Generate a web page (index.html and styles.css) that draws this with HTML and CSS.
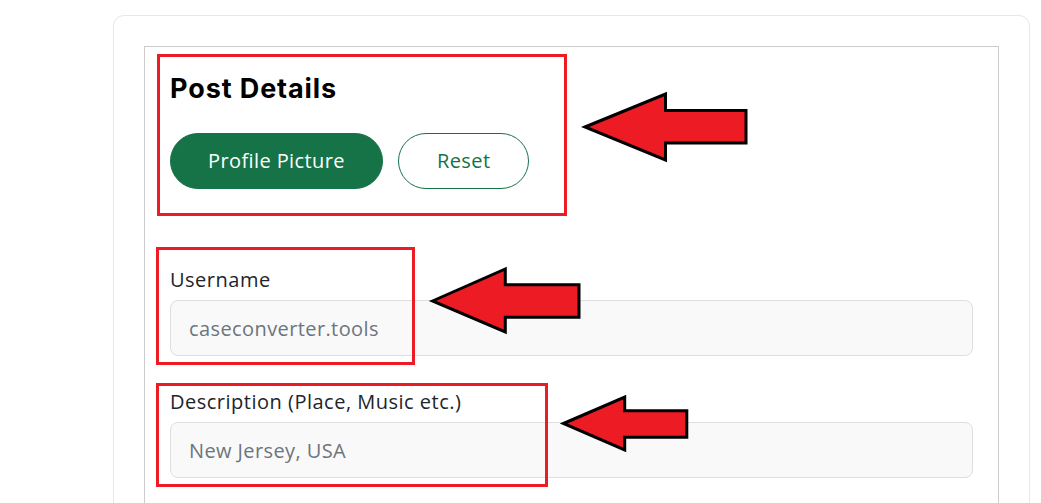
FILE: index.html
```html
<!DOCTYPE html>
<html lang="en">
<head>
    <meta charset="UTF-8">
    <meta name="viewport" content="width=device-width, initial-scale=1.0">
    <title>Post Details - Case Converter</title>
    <link rel="stylesheet" href="styles.css">
</head>
<body>
    <div class="page">
        <div class="card">
            <div class="panel">
                <!-- Post header -->
                <section class="post-head">
                    <h2>Post Details</h2>
                    <div class="actions">
                        <button class="btn btn-fill">Profile Picture</button>
                        <button class="btn btn-line">Reset</button>
                    </div>
                </section>

                <div class="field">
                    <label for="username">Username</label>
                    <input id="username" type="text" placeholder="caseconverter.tools">
                </div>

                <div class="field">
                    <label for="description">Description (Place, Music etc.)</label>
                    <input id="description" type="text" placeholder="New Jersey, USA">
                </div>
            </div>
        </div>
    </div>

    <!-- annotation marks drawn over the screenshot -->
    <svg class="marks" width="1041" height="503" viewBox="0 0 1041 503">
        <g fill="none" stroke="#ed1c24" stroke-width="3" shape-rendering="crispEdges">
            <rect x="158.5" y="55.5" width="407" height="159"/>
            <rect x="157.5" y="248.5" width="256" height="115"/>
            <rect x="157.5" y="384.5" width="389" height="101"/>
        </g>
        <g fill="#ed1c24" stroke="#000" stroke-width="3">
            <polygon points="585,127 665.5,94 665.5,110.5 746,110.5 746,143 665.5,143 665.5,160"/>
            <polygon points="432.5,301 505.3,269 505.3,284.7 579,284.7 579,317.3 505.3,317.3 505.3,332"/>
            <polygon points="563.5,423.5 624.7,397 624.7,410.7 686.8,410.7 686.8,437.3 624.7,437.3 624.7,450"/>
        </g>
    </svg>
</body>
</html>
```

FILE: styles.css
```css
body {
    margin: 0;
    font-family: "Open Sans", Arial, sans-serif;
    color: #212529;
    background: white;
    overflow: hidden;
}

.page {
    padding: 15px 11px 0 113px;
}

.card {
    border: 1px solid #e2e8ef;
    border-radius: 11px;
    padding: 30px 30px 40px;
}

.panel {
    border: 1px solid #cccccc;
    padding: 26px 25px 60px;
}

.post-head h2 {
    font-family: Inter, "Open Sans", sans-serif;
    font-size: 27px;
    font-weight: 700;
    letter-spacing: 0.9px;
    line-height: 31px;
    color: #000;
    margin: 0 0 29px;
}

.post-head {
    margin-bottom: 76px;
}

.actions {
    display: flex;
    gap: 15px;
}

.btn {
    font-family: "Open Sans", Arial, sans-serif;
    font-size: 20px;
    letter-spacing: 0.4px;
    line-height: 24px;
    height: 56px;
    border-radius: 28px;
    cursor: pointer;
}

.btn-fill {
    background-color: #157347;
    color: white;
    border: 1px solid #157347;
    padding: 0 37px;
}

.btn-line {
    background-color: white;
    color: #157347;
    border: 1px solid #157347;
    padding: 0 38px;
}

.field {
    display: flex;
    flex-direction: column;
    margin-bottom: 31px;
}

.field label {
    font-size: 20px;
    letter-spacing: 0.5px;
    line-height: 28px;
    padding-top: 1px;
    margin-bottom: 6px;
}

.field input {
    height: 56px;
    box-sizing: border-box;
    border: 1px solid #dedede;
    border-radius: 8px;
    background-color: #f9f9f9;
    padding: 0 18px;
    font-family: "Open Sans", Arial, sans-serif;
    font-size: 20px;
    letter-spacing: 0.4px;
    color: #212529;
}

.field input::placeholder {
    color: #6c757d;
}

.marks {
    position: absolute;
    top: 0;
    left: 0;
    pointer-events: none;
}
```
